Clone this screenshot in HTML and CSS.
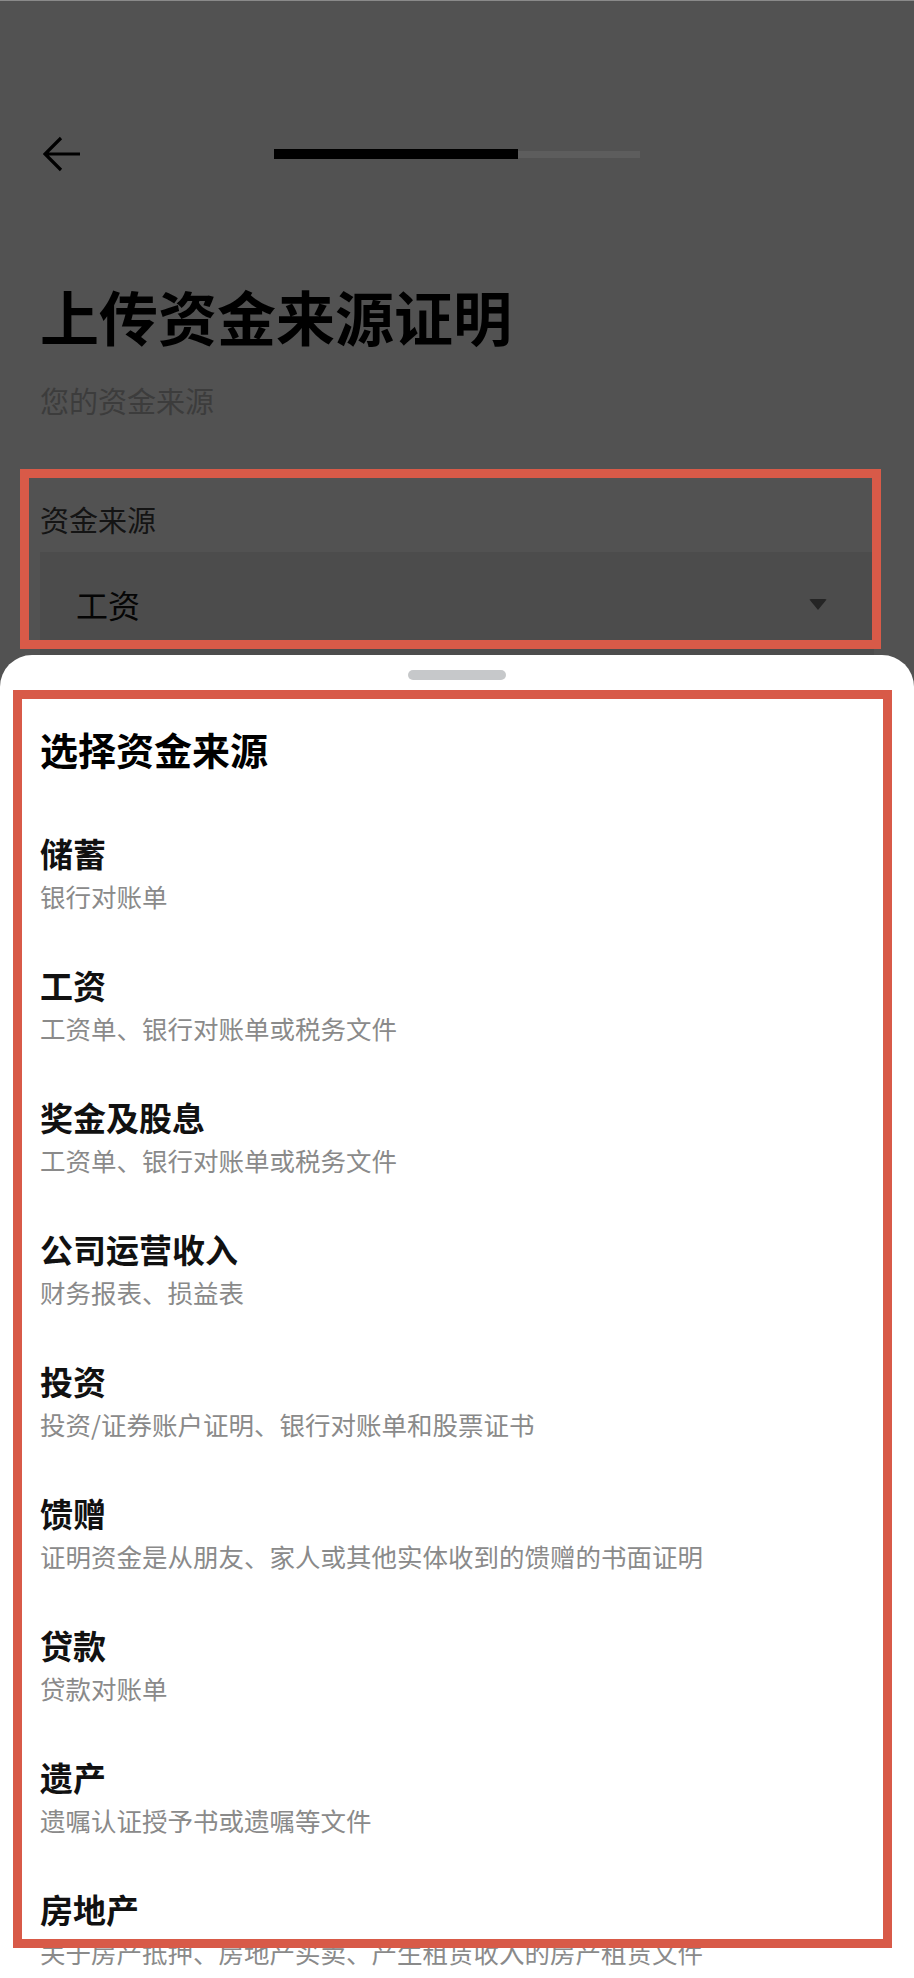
FILE: index.html
```html
<!DOCTYPE html>
<html lang="zh-CN">
<head>
<meta charset="utf-8">
<title>上传资金来源证明</title>
<link rel="stylesheet" href="styles.css">
</head>
<body>
<div class="screen">
  <div class="page">
    <div class="header">
      <svg class="back" width="38" height="36" viewBox="0 0 38 36" aria-hidden="true">
        <path d="M37 18 H2 M18 2 L2 18 L18 34" fill="none" stroke="#000" stroke-width="3.2" stroke-linecap="butt" stroke-linejoin="miter"/>
      </svg>
      <div class="progress"><div class="progress-fill"></div></div>
    </div>
    <h1 class="title">上传资金来源证明</h1>
    <p class="subtitle">您的资金来源</p>
    <div class="label">资金来源</div>
    <div class="field">
      <span class="field-value">工资</span>
      <span class="caret"></span>
    </div>
  </div>

  <div class="sheet">
    <div class="handle"></div>
    <h2 class="sheet-title">选择资金来源</h2>
    <ul class="options">
      <li class="option"><div class="opt-title">储蓄</div><div class="opt-sub">银行对账单</div></li>
      <li class="option"><div class="opt-title">工资</div><div class="opt-sub">工资单、银行对账单或税务文件</div></li>
      <li class="option"><div class="opt-title">奖金及股息</div><div class="opt-sub">工资单、银行对账单或税务文件</div></li>
      <li class="option"><div class="opt-title">公司运营收入</div><div class="opt-sub">财务报表、损益表</div></li>
      <li class="option"><div class="opt-title">投资</div><div class="opt-sub">投资/证券账户证明、银行对账单和股票证书</div></li>
      <li class="option"><div class="opt-title">馈赠</div><div class="opt-sub">证明资金是从朋友、家人或其他实体收到的馈赠的书面证明</div></li>
      <li class="option"><div class="opt-title">贷款</div><div class="opt-sub">贷款对账单</div></li>
      <li class="option"><div class="opt-title">遗产</div><div class="opt-sub">遗嘱认证授予书或遗嘱等文件</div></li>
      <li class="option"><div class="opt-title">房地产</div><div class="opt-sub">关于房产抵押、房地产买卖、产生租赁收入的房产租赁文件</div></li>
    </ul>
  </div>

  <div class="mark mark-field"></div>
  <div class="mark mark-sheet"></div>
</div>
</body>
</html>
```

FILE: styles.css
```css
html, body {
  margin: 0;
  padding: 0;
  width: 914px;
  height: 1978px;
  overflow: hidden;
  background: #525252;
  font-family: "Noto Sans CJK SC", "Noto Sans", sans-serif;
}

.screen {
  position: relative;
  width: 914px;
  height: 1978px;
  background: #525252;
  border-top: 1px solid #8a8a8a;
  box-sizing: border-box;
  overflow: hidden;
}

.page {
  padding: 0 40px;
}

.header {
  display: flex;
  align-items: center;
  height: 48px;
  padding-top: 129px;
  padding-left: 3px;
}

.back {
  display: block;
  flex: none;
}

.progress {
  margin-left: 193px;
  width: 366px;
  height: 7px;
  background: #5d5d5d;
  display: flex;
  align-items: center;
}

.progress-fill {
  width: 244px;
  height: 10px;
  background: #000;
}

.title {
  margin: 102px 0 0;
  font-size: 59px;
  line-height: 72px;
  font-weight: 700;
  color: #000;
  letter-spacing: 0;
}

.subtitle {
  margin: 28px 0 0;
  font-size: 29px;
  line-height: 40px;
  color: #3c3c3c;
}

.label {
  margin-top: 79px;
  font-size: 29px;
  line-height: 40px;
  color: #141414;
}

.field {
  margin-top: 13px;
  height: 104px;
  background: #4c4c4c;
  display: flex;
  align-items: center;
  justify-content: space-between;
  padding: 0 47px 0 36px;
}

.field-value {
  font-size: 32px;
  line-height: 44px;
  color: #050505;
}

.caret {
  width: 0;
  height: 0;
  border-left: 9px solid transparent;
  border-right: 9px solid transparent;
  border-top: 11px solid #252525;
  border-radius: 2px;
}

.sheet {
  position: absolute;
  left: 0;
  right: 0;
  top: 654px;
  bottom: 0;
  background: #fff;
  border-radius: 32px 32px 0 0;
  padding: 0 40px;
}

.handle {
  width: 98px;
  height: 10px;
  border-radius: 5px;
  background: #c6c8ca;
  margin: 15px auto 0;
}

.sheet-title {
  margin: 43px 0 0;
  font-size: 38px;
  line-height: 52px;
  font-weight: 700;
  color: #000;
}

.options {
  list-style: none;
  margin: 56px 0 0;
  padding: 0;
  display: flex;
  flex-direction: column;
  gap: 49px;
}

.opt-title {
  font-size: 33px;
  line-height: 44px;
  font-weight: 700;
  color: #111;
}

.opt-sub {
  margin-top: 3px;
  font-size: 25.5px;
  line-height: 36px;
  color: #8a8a8a;
}

.mark {
  position: absolute;
  border: 9px solid #d85a48;
  box-sizing: border-box;
  pointer-events: none;
}

.mark-field {
  left: 20px;
  top: 468px;
  width: 861px;
  height: 180px;
}

.mark-sheet {
  left: 13px;
  top: 689px;
  width: 879px;
  height: 1258px;
}
```
